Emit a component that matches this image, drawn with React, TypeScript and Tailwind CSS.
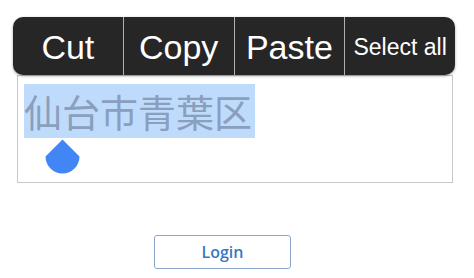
import React from "react";

const actions = [
  { label: "Cut", size: "text-[34px]" },
  { label: "Copy", size: "text-[34px]" },
  { label: "Paste", size: "text-[34px]" },
  { label: "Select all", size: "text-[23px]" },
];

export default function App() {
  return (
    <div className="w-[474px] h-[278px] bg-white overflow-hidden pt-[17px]">
      {/* context toolbar */}
      <div
        className="relative z-10 ml-[13px] w-[442px] h-[58px] rounded-[10px] bg-[#262626] shadow-[0_1px_3px_rgba(0,0,0,0.35)] flex text-white"
        style={{ fontFamily: '"Liberation Sans", Arial, sans-serif' }}
      >
        {actions.map((a, i) => (
          <div
            key={a.label}
            className={
              "flex-1 flex items-center justify-center pt-[2px] " +
              a.size +
              (i > 0 ? " border-l border-[#b0b0b0]" : "")
            }
          >
            {a.label}
          </div>
        ))}
      </div>

      {/* text field with selection */}
      <div className="ml-[17px] w-[436px] h-[108px] border border-[#c8c8c8] bg-white px-[6px] pt-[8px]">
        <div
          className="text-[38px] leading-[54px] text-[#8a9fbd] whitespace-nowrap"
          style={{ fontFamily: '"Noto Sans CJK JP", "Noto Sans", sans-serif' }}
        >
          <span className="bg-[#bfdbfb] inline-block pr-[3px]">仙台市青葉区</span>
        </div>
        <svg width="36" height="36" viewBox="0 0 36 36" className="ml-[21px] mt-[1px]">
          <path d="M17.5 0.5 L34.5 17.5 A17 17 0 1 1 0.5 17.5 Z" fill="#4285f4" />
        </svg>
      </div>

      {/* login */}
      <button
        className="block mt-[52px] ml-[154px] w-[137px] h-[34px] rounded-[3px] border border-[#8aa6cb] bg-white text-[#3a78c2] text-[16px] font-semibold"
        style={{ fontFamily: '"Open Sans", "Noto Sans", sans-serif' }}
      >
        Login
      </button>
    </div>
  );
}
